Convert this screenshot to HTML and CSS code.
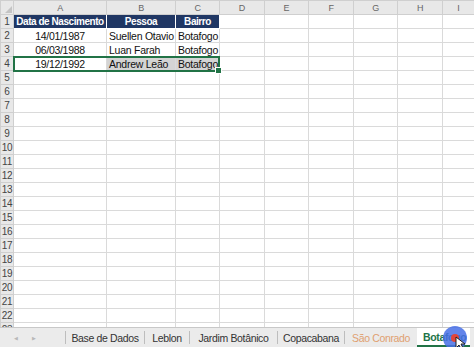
FILE: index.html
```html
<!DOCTYPE html>
<html lang="pt-BR">
<head>
    <meta charset="UTF-8">
    <title>Bairros</title>
    <link rel="stylesheet" href="styles.css">
</head>
<body>
<div class="sheet">
    <table class="grid">
        <colgroup>
            <col class="c-rn"><col class="c-a"><col class="c-b"><col class="c-c">
            <col class="c-n"><col class="c-n"><col class="c-n"><col class="c-n"><col class="c-n"><col class="c-i">
        </colgroup>
        <tr class="colhead"><th class="corner"><span class="tri"></span></th><th>A</th><th>B</th><th>C</th><th>D</th><th>E</th><th>F</th><th>G</th><th>H</th><th>I</th></tr>
        <tr><th>1</th><td class="hd">Data de Nascimento</td><td class="hd">Pessoa</td><td class="hd">Bairro</td><td></td><td></td><td></td><td></td><td></td><td></td></tr>
        <tr><th>2</th><td class="ctr">14/01/1987</td><td>Suellen Otavio</td><td>Botafogo</td><td></td><td></td><td></td><td></td><td></td><td></td></tr>
        <tr><th>3</th><td class="ctr">06/03/1988</td><td>Luan Farah</td><td>Botafogo</td><td></td><td></td><td></td><td></td><td></td><td></td></tr>
        <tr class="selrow"><th>4</th><td class="ctr">19/12/1992</td><td class="shade">Andrew Leão</td><td class="shade">Botafogo</td><td></td><td></td><td></td><td></td><td></td><td></td></tr>
        <tr><th>5</th><td></td><td></td><td></td><td></td><td></td><td></td><td></td><td></td><td></td></tr>
        <tr><th>6</th><td></td><td></td><td></td><td></td><td></td><td></td><td></td><td></td><td></td></tr>
        <tr><th>7</th><td></td><td></td><td></td><td></td><td></td><td></td><td></td><td></td><td></td></tr>
        <tr><th>8</th><td></td><td></td><td></td><td></td><td></td><td></td><td></td><td></td><td></td></tr>
        <tr><th>9</th><td></td><td></td><td></td><td></td><td></td><td></td><td></td><td></td><td></td></tr>
        <tr><th>10</th><td></td><td></td><td></td><td></td><td></td><td></td><td></td><td></td><td></td></tr>
        <tr><th>11</th><td></td><td></td><td></td><td></td><td></td><td></td><td></td><td></td><td></td></tr>
        <tr><th>12</th><td></td><td></td><td></td><td></td><td></td><td></td><td></td><td></td><td></td></tr>
        <tr><th>13</th><td></td><td></td><td></td><td></td><td></td><td></td><td></td><td></td><td></td></tr>
        <tr><th>14</th><td></td><td></td><td></td><td></td><td></td><td></td><td></td><td></td><td></td></tr>
        <tr><th>15</th><td></td><td></td><td></td><td></td><td></td><td></td><td></td><td></td><td></td></tr>
        <tr><th>16</th><td></td><td></td><td></td><td></td><td></td><td></td><td></td><td></td><td></td></tr>
        <tr><th>17</th><td></td><td></td><td></td><td></td><td></td><td></td><td></td><td></td><td></td></tr>
        <tr><th>18</th><td></td><td></td><td></td><td></td><td></td><td></td><td></td><td></td><td></td></tr>
        <tr><th>19</th><td></td><td></td><td></td><td></td><td></td><td></td><td></td><td></td><td></td></tr>
        <tr><th>20</th><td></td><td></td><td></td><td></td><td></td><td></td><td></td><td></td><td></td></tr>
        <tr><th>21</th><td></td><td></td><td></td><td></td><td></td><td></td><td></td><td></td><td></td></tr>
        <tr><th>22</th><td></td><td></td><td></td><td></td><td></td><td></td><td></td><td></td><td></td></tr>
        <tr><th>23</th><td></td><td></td><td></td><td></td><td></td><td></td><td></td><td></td><td></td></tr>
    </table>
    <div class="selection"><span class="handle"></span></div>
</div>

<div class="tabbar">
    <div class="nav"><span class="arrow">&#9664;</span><span class="arrow">&#9654;</span></div>
    <div class="tab t1">Base de Dados</div>
    <div class="tab t2">Leblon</div>
    <div class="tab t3">Jardim Botânico</div>
    <div class="tab t4">Copacabana</div>
    <div class="tab t5 hover">São Conrado</div>
    <div class="tab active">Botafogo</div>
    <div class="pointer">
        <span class="dot"></span>
        <svg class="cursor" width="12" height="14" viewBox="0 0 12 14"><path d="M1 1 L1 12 L4 9 L6 13 L8 12 L6 8 L10 8 Z" fill="#fff" stroke="#222" stroke-width="1"/></svg>
    </div>
</div>
</body>
</html>
```

FILE: styles.css
```css
body {
    margin: 0;
    width: 474px;
    height: 347px;
    overflow: hidden;
    background: #fff;
    font-family: "Liberation Sans", Arial, sans-serif;
}

.sheet {
    position: relative;
    height: 327px;
    overflow: hidden;
}

.grid {
    border-collapse: collapse;
    table-layout: fixed;
    width: 474px;
}

.c-rn { width: 13px; }
.c-a { width: 93px; }
.c-b { width: 69px; }
.c-c { width: 44px; }
.c-n { width: 44.6px; }
.c-i { width: 32px; }

.grid th,
.grid td {
    height: 13px;
    padding: 0 2px;
    border: 1px solid #dadada;
    font-size: 10.5px;
    line-height: 12px;
    letter-spacing: -0.25px;
    color: #111;
    white-space: nowrap;
    overflow: hidden;
    text-align: left;
}

.grid th {
    background: #e8e8e8;
    color: #444;
    font-weight: normal;
    font-size: 10px;
    text-align: center;
    padding: 0;
    letter-spacing: -0.3px;
    border-color: #cfcfcf;
}

.colhead th {
    height: 13px;
    color: #666;
    font-size: 9px;
}

.corner {
    position: relative;
}

.tri {
    position: absolute;
    right: 1px;
    bottom: 1px;
    border-left: 7px solid transparent;
    border-bottom: 7px solid #c4c4c4;
}

.grid td.hd {
    background: #203764;
    color: #fff;
    font-weight: bold;
    font-size: 10px;
    text-align: center;
    letter-spacing: -0.45px;
    border-color: #fff;
    padding: 0;
}

.grid td.ctr {
    text-align: center;
    letter-spacing: -0.3px;
}

.grid td.shade {
    background: #d4d4d4;
}

.selection {
    position: absolute;
    left: 13px;
    top: 56px;
    width: 203px;
    height: 12px;
    border: 2px solid #217346;
    pointer-events: none;
}

.handle {
    position: absolute;
    right: -4px;
    bottom: -4px;
    width: 5px;
    height: 5px;
    background: #217346;
    border: 1px solid #fff;
}

.tabbar {
    position: relative;
    display: flex;
    align-items: stretch;
    height: 19px;
    background: #ebebeb;
    border-top: 1px solid #c8c8c8;
    font-size: 10.5px;
    letter-spacing: -0.35px;
    color: #333;
    white-space: nowrap;
}

.nav {
    display: flex;
    align-items: center;
    gap: 14px;
    width: 51px;
    padding-left: 14px;
    border-right: 1px solid #bdbdbd;
    margin: 3px 0;
}

.arrow {
    font-size: 5px;
    line-height: 8px;
    color: #b8b8b8;
}

.tab {
    display: flex;
    align-items: center;
    justify-content: center;
    margin: 3px 0;
    border-right: 1px solid #bdbdbd;
}

.t1 { width: 78px; }
.t2 { width: 44px; }
.t3 { width: 87px; }
.t4 { width: 66px; }
.t5 { width: 72px; }

.tab.hover {
    color: #e0a070;
    border-right: none;
}

.tab.active {
    margin: 0;
    padding-left: 6px;
    width: 47px;
    justify-content: flex-start;
    background: #fff;
    color: #217346;
    font-weight: bold;
    border-right: none;
    border-bottom: 2px solid #217346;
    overflow: hidden;
}

.pointer {
    position: absolute;
    left: 443px;
    top: -2px;
    width: 24px;
    height: 24px;
    border-radius: 50%;
    background: rgba(70, 110, 230, 0.85);
}

.dot {
    position: absolute;
    left: 8px;
    top: 8px;
    width: 8px;
    height: 8px;
    border-radius: 50%;
    background: #e0453a;
}

.cursor {
    position: absolute;
    left: 12px;
    top: 10px;
}
```
